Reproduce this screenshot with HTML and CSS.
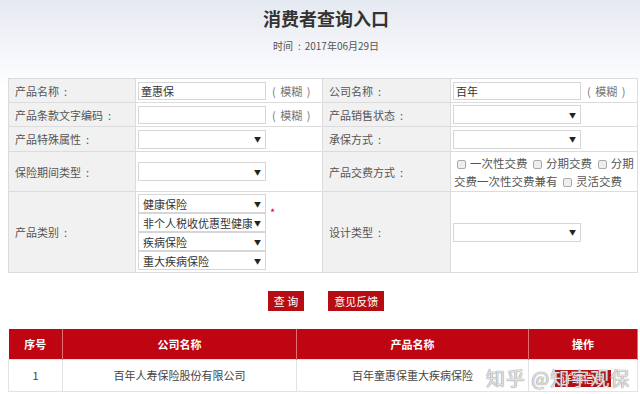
FILE: index.html
```html
<!DOCTYPE html>
<html lang="zh">
  <head>
    <meta charset="UTF-8" />
    <title>消费者查询入口</title>
    <link rel="stylesheet" href="styles.css">
  </head>
  <body>
    <div class="page">
      <h1 class="title">消费者查询入口</h1>
      <p class="date">时间<span class="colon">:</span>2017年06月29日</p>

      <table class="form">
        <colgroup>
          <col class="c-label" /><col class="c-field" /><col class="c-label2" /><col />
        </colgroup>
        <tr class="r1">
          <td class="label">产品名称<span class="colon">:</span></td>
          <td><input class="box" type="text" value="童惠保" /><span class="hint">( 模糊 )</span></td>
          <td class="label">公司名称<span class="colon">:</span></td>
          <td><input class="box" type="text" value="百年" /><span class="hint">( 模糊 )</span></td>
        </tr>
        <tr class="r2">
          <td class="label">产品条款文字编码<span class="colon">:</span></td>
          <td><input class="box" type="text" /><span class="hint">( 模糊 )</span></td>
          <td class="label">产品销售状态<span class="colon">:</span></td>
          <td><div class="sel"><span></span><i>▼</i></div></td>
        </tr>
        <tr class="r3">
          <td class="label">产品特殊属性<span class="colon">:</span></td>
          <td><div class="sel"><span></span><i>▼</i></div></td>
          <td class="label">承保方式<span class="colon">:</span></td>
          <td><div class="sel"><span></span><i>▼</i></div></td>
        </tr>
        <tr class="r4">
          <td class="label">保险期间类型<span class="colon">:</span></td>
          <td><div class="sel"><span></span><i>▼</i></div></td>
          <td class="label">产品交费方式<span class="colon">:</span></td>
          <td class="checks"><span class="cb"></span>一次性交费 <span class="cb"></span>分期交费 <span class="cb"></span>分期交费一次性交费兼有 <span class="cb"></span>灵活交费</td>
        </tr>
        <tr class="r5">
          <td class="label">产品类别<span class="colon">:</span></td>
          <td>
            <div class="cats">
              <div class="stack">
                <div class="sel"><span>健康保险</span><i>▼</i></div>
                <div class="sel"><span>非个人税收优惠型健康</span><i>▼</i></div>
                <div class="sel"><span>疾病保险</span><i>▼</i></div>
                <div class="sel"><span>重大疾病保险</span><i>▼</i></div>
              </div>
              <span class="star">*</span>
            </div>
          </td>
          <td class="label">设计类型<span class="colon">:</span></td>
          <td><div class="sel"><span></span><i>▼</i></div></td>
        </tr>
      </table>

      <div class="actions">
        <button class="btn">查 询</button>
        <button class="btn">意见反馈</button>
      </div>

      <div class="result">
        <table class="list">
          <colgroup>
            <col class="c-no" /><col class="c-co" /><col class="c-prod" /><col />
          </colgroup>
          <tr class="head">
            <th>序号</th>
            <th>公司名称</th>
            <th>产品名称</th>
            <th>操作</th>
          </tr>
          <tr class="row">
            <td>1</td>
            <td>百年人寿保险股份有限公司</td>
            <td>百年童惠保重大疾病保险</td>
            <td><span class="detail">详细信息</span></td>
          </tr>
        </table>
        <div class="mark">知乎 @知宇观保</div>
      </div>
    </div>
  </body>
</html>
```

FILE: styles.css
```css
* {
  margin: 0;
  padding: 0;
  box-sizing: border-box;
}
body {
  font-family: "Noto Sans CJK SC", "Liberation Sans", sans-serif;
  color: #555;
  background: linear-gradient(#e5e9f1, #f7f8fb 60px, #fff 90px);
  height: 394px;
  overflow: hidden;
}
.page {
  padding: 6px 2px 0 8px;
}
.title {
  text-align: center;
  font-size: 18px;
  line-height: 24px;
  color: #333;
  font-weight: bold;
  margin-right: -6px;
}
.date {
  text-align: center;
  font-size: 10px;
  line-height: 14px;
  margin-top: 9px;
  color: #555;
  margin-right: -6px;
}
.colon {
  margin: 0 4px 0 5px;
}

/* search form */
.form {
  width: 630px;
  margin-top: 25px;
  border-collapse: collapse;
  table-layout: fixed;
  font-size: 11px;
  background: #fff;
}
.form td {
  border: 1px solid #dcdcdc;
  padding: 0 2px;
  vertical-align: middle;
}
.c-label { width: 127px; }
.c-field { width: 187px; }
.c-label2 { width: 128px; }
.form td.label {
  background: #f1f1f1;
  color: #555;
  padding-left: 6px;
}
.r1 td, .r2 td { height: 24px; }
.r3 td { height: 25px; }
.r4 td { height: 40px; }
.r5 td { height: 81px; }

.box {
  width: 128px;
  height: 18px;
  border: 1px solid #d6d6d6;
  font: 11px "Noto Sans CJK SC", sans-serif;
  color: #333;
  padding: 0 2px;
  vertical-align: middle;
}
.hint {
  color: #777;
  font-size: 11px;
  margin-left: 6px;
  vertical-align: middle;
  word-spacing: 2px;
}
.sel {
  width: 128px;
  height: 19px;
  border: 1px solid #d6d6d6;
  background: #fff;
  display: flex;
  align-items: center;
  justify-content: space-between;
  padding: 0 4px 0 4px;
  color: #333;
  font-size: 11px;
}
.sel span {
  white-space: nowrap;
  overflow: hidden;
  flex: 1;
}
.sel i {
  font-style: normal;
  font-size: 7px;
  color: #222;
  margin-left: 2px;
}
.cats {
  display: flex;
  align-items: flex-start;
}
.star {
  color: #d0021b;
  font-size: 11px;
  margin: 10px 0 0 4px;
}
.form td.checks {
  line-height: 18px;
  color: #555;
  font-size: 11.5px;
  padding: 0 0 0 3px;
}
.cb {
  display: inline-block;
  width: 9px;
  height: 9px;
  border: 1px solid #aaa;
  background: #eee;
  border-radius: 2px;
  margin: 0 4px 0 3px;
  vertical-align: -1px;
}

/* buttons */
.actions {
  display: flex;
  justify-content: center;
  gap: 24px;
  margin-top: 18px;
  margin-right: -6px;
}
.btn {
  background: #b50d12;
  color: #fff;
  border: none;
  font: 11px/20px "Noto Sans CJK SC", sans-serif;
  height: 20px;
  padding: 0 6px;
}

/* result list */
.result {
  position: relative;
  margin-top: 18px;
}
.list {
  width: 630px;
  border-collapse: collapse;
  table-layout: fixed;
  font-size: 11px;
  text-align: center;
}
.c-no { width: 54px; }
.c-co { width: 234px; }
.c-prod { width: 232px; }
.list th {
  background: #c00512;
  color: #fff;
  height: 30px;
  border-right: 1px solid #e36d73;
  font-weight: bold;
}
.list td {
  height: 32px;
  color: #444;
  border: 1px solid #e3e3e3;
  background: #fff;
}
.detail {
  display: inline-block;
  background: #b50d12;
  color: #fff;
  padding: 0 6px;
  line-height: 17px;
  margin-top: 6px;
}
.mark {
  position: absolute;
  left: 478px;
  top: 35px;
  font-size: 19px;
  color: rgba(255, 255, 255, 0.75);
  text-shadow: 0 0 1px #888, 0 0 1px #888;
  letter-spacing: 1px;
  white-space: nowrap;
}
```
